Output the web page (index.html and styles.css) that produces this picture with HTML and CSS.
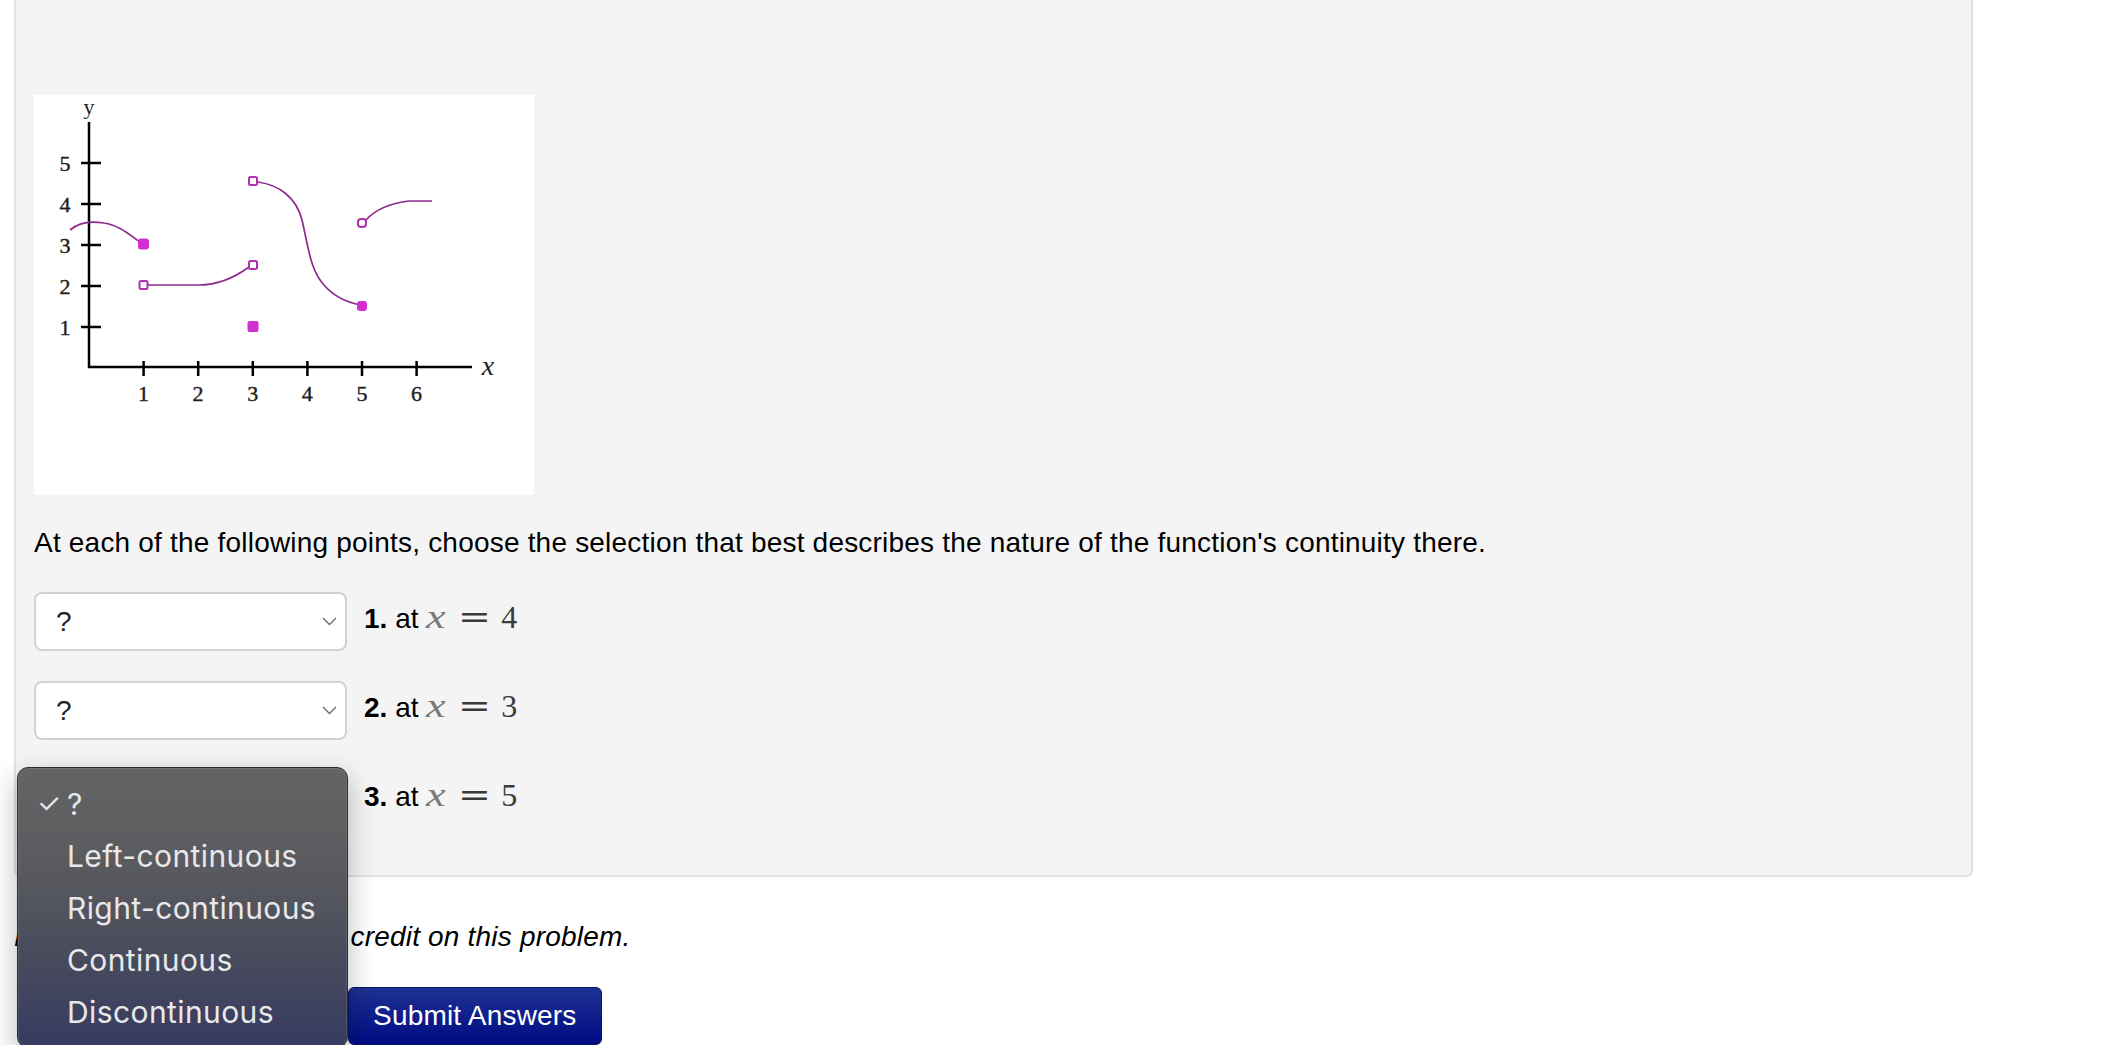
FILE: index.html
```html
<!DOCTYPE html>
<html lang="en">
<head>
<meta charset="utf-8">
<title>Problem</title>
<link rel="stylesheet" href="styles.css">
</head>
<body>
<div class="page">
  <div class="panel">
    <svg class="graph" width="500" height="400" viewBox="0 0 500 400">
      <rect width="500" height="400" fill="#fff"/>
      <g stroke="#000" stroke-width="2.5" fill="none">
        <path d="M55 27 V272 H438"/>
        <path d="M47 68 H67 M47 109 H67 M47 150 H67 M47 191 H67 M47 232 H67"/>
        <path d="M109.6 266 V281 M164.2 266 V281 M218.8 266 V281 M273.4 266 V281 M328 266 V281 M382.6 266 V281"/>
      </g>
      <g class="tick-label" text-anchor="middle">
        <text x="31" y="76">5</text>
        <text x="31" y="117">4</text>
        <text x="31" y="158">3</text>
        <text x="31" y="199">2</text>
        <text x="31" y="240">1</text>
        <text x="109.6" y="306">1</text>
        <text x="164.2" y="306">2</text>
        <text x="218.8" y="306">3</text>
        <text x="273.4" y="306">4</text>
        <text x="328" y="306">5</text>
        <text x="382.6" y="306">6</text>
      </g>
      <text class="axis-label" x="55" y="19" text-anchor="middle">y</text>
      <text class="axis-label axis-x" x="454" y="280" text-anchor="middle">x</text>
      <g stroke="#8e2a8e" stroke-width="1.7" fill="none">
        <path d="M36 135 C45 127 58 126 70 128 C86 130 98 142 109 149"/>
        <path d="M114 190 L165 190 C185 190 200 183 215 172"/>
        <path d="M224 87 C245 90 262 102 268 125 C274 150 276 175 290 190 C300 202 312 207 326 210"/>
        <path d="M332 125 C342 114 358 108 375 106 L398 106"/>
      </g>
      <g fill="#d22fd2">
        <rect x="104" y="143.5" width="11" height="11" rx="3"/>
        <rect x="213.5" y="226" width="11" height="11" rx="2"/>
        <rect x="323" y="206" width="10" height="10" rx="3"/>
      </g>
      <g fill="#fff" stroke="#b030b0" stroke-width="2">
        <rect x="105.5" y="186" width="8" height="8" rx="1.5"/>
        <rect x="215" y="166" width="8" height="8" rx="1.5"/>
        <rect x="215" y="82" width="8" height="8" rx="1.5"/>
        <rect x="324" y="124" width="8" height="8" rx="3"/>
      </g>
    </svg>

    <p class="prompt">At each of the following points, choose the selection that best describes the nature of the function's continuity there.</p>

    <div class="rows">
      <div class="row">
        <div class="select"><span class="select-value">?</span><svg class="chevron" width="15" height="9" viewBox="0 0 15 9"><path d="M1 1 L7.5 7.5 L14 1"/></svg></div>
        <span class="label"><b>1.</b> at <span class="mi">x</span><span class="mo">=</span><span class="mn">4</span></span>
      </div>
      <div class="row">
        <div class="select"><span class="select-value">?</span><svg class="chevron" width="15" height="9" viewBox="0 0 15 9"><path d="M1 1 L7.5 7.5 L14 1"/></svg></div>
        <span class="label"><b>2.</b> at <span class="mi">x</span><span class="mo">=</span><span class="mn">3</span></span>
      </div>
      <div class="row">
        <div class="select"><span class="select-value">?</span><svg class="chevron" width="15" height="9" viewBox="0 0 15 9"><path d="M1 1 L7.5 7.5 L14 1"/></svg></div>
        <span class="label"><b>3.</b> at <span class="mi">x</span><span class="mo">=</span><span class="mn">5</span></span>
        <ul class="menu">
          <li class="menu-item checked"><span class="check">✓</span>?</li>
          <li class="menu-item">Left-continuous</li>
          <li class="menu-item">Right-continuous</li>
          <li class="menu-item">Continuous</li>
          <li class="menu-item">Discontinuous</li>
        </ul>
      </div>
    </div>
  </div>

  <p class="note"><i>Note: You can earn partial credit on this problem.</i></p>

  <div class="buttons">
    <button class="btn btn-preview">Preview My Answers</button>
    <button class="btn btn-submit">Submit Answers</button>
  </div>
</div>
</body>
</html>
```

FILE: styles.css
```css
html, body {
  margin: 0;
  padding: 0;
  background: #fff;
  overflow: hidden;
}

body {
  font-family: "Liberation Sans", Arial, Helvetica, sans-serif;
  font-size: 28px;
  line-height: 42px;
  letter-spacing: 0.2px;
  color: #000;
}

.page {
  width: 1973px;
  padding: 0 0 0 14px;
  box-sizing: border-box;
}

.panel {
  margin-top: -20px;
  background: #f4f4f4;
  border: 2px solid #e2e2e2;
  border-radius: 6px;
  padding: 113px 18px 46px 18px;
}

.graph {
  display: block;
}

.tick-label text {
  font-family: "Liberation Serif", "Times New Roman", serif;
  font-size: 22px;
  fill: #1e1e1e;
  stroke: #1e1e1e;
  stroke-width: 0.4;
}

.axis-label {
  font-family: "Liberation Serif", "Times New Roman", serif;
  font-size: 22px;
  fill: #1e1e1e;
}

.axis-x {
  font-style: italic;
  font-size: 28px;
}

.prompt {
  margin: 27px 0 0 0;
}

.rows {
  margin-top: 28px;
  display: flex;
  flex-direction: column;
  gap: 30px;
}

.row {
  position: relative;
  display: flex;
  align-items: center;
  gap: 17px;
}

.select {
  width: 313px;
  height: 59px;
  box-sizing: border-box;
  background: #fff;
  border: 2px solid #d2d2d2;
  border-radius: 8px;
  padding: 0 8px 0 20px;
  display: flex;
  align-items: center;
  justify-content: space-between;
  color: #222;
}

.chevron path {
  fill: none;
  stroke: #6a6a6a;
  stroke-width: 1.4;
}

.label {
  white-space: nowrap;
  letter-spacing: 0;
  margin-bottom: 8px;
}

.label b {
  font-weight: bold;
}

.mi {
  display: inline-block;
  font-family: "Liberation Serif", "Times New Roman", serif;
  font-style: italic;
  font-size: 34px;
  color: #7a7a7a;
  transform: scaleX(1.3);
  transform-origin: left center;
}

.mo {
  display: inline-block;
  font-family: "DejaVu Serif", serif;
  font-size: 31px;
  color: #3a3a3a;
  margin-left: 17px;
  transform: scaleX(1.27);
  transform-origin: left center;
}

.mn {
  font-family: "Liberation Serif", "Times New Roman", serif;
  font-size: 32px;
  color: #3a3a3a;
  margin-left: 17px;
}

.menu {
  position: absolute;
  left: -17px;
  top: -3px;
  width: 331px;
  height: 281px;
  box-sizing: border-box;
  margin: 0;
  padding: 10px 0 0 0;
  list-style: none;
  border: 1px solid #2b2b2b;
  border-radius: 11px;
  background: linear-gradient(180deg, #646464 0%, #5a5b5f 35%, #474a5c 70%, #363b62 100%);
  box-shadow: 0 10px 28px rgba(0, 0, 0, 0.28), inset 0 0 0 1px rgba(255, 255, 255, 0.1);
  font-family: Inter, "Liberation Sans", sans-serif;
  font-size: 30px;
  letter-spacing: 0.4px;
  line-height: 52px;
  color: #e8e8ea;
  z-index: 5;
}

.menu-item {
  padding-left: 49px;
  position: relative;
  white-space: nowrap;
}

.check {
  position: absolute;
  left: 19px;
  font-size: 27px;
  color: #e8e8ea;
}

.note {
  margin: 39px 0 0 0;
}

.buttons {
  margin-top: 29px;
  padding-left: 8px;
  display: flex;
  gap: 10px;
}

.btn {
  height: 58px;
  box-sizing: border-box;
  border-radius: 6px;
  font-family: "Liberation Sans", Arial, sans-serif;
  font-size: 28px;
  letter-spacing: 0.2px;
  padding: 0 24px;
  color: #fff;
  white-space: nowrap;
  background: linear-gradient(180deg, #1e3192 0%, #000c85 100%);
  border: 1px solid #0a1660;
}

.btn-preview {
  width: 316px;
}
```
